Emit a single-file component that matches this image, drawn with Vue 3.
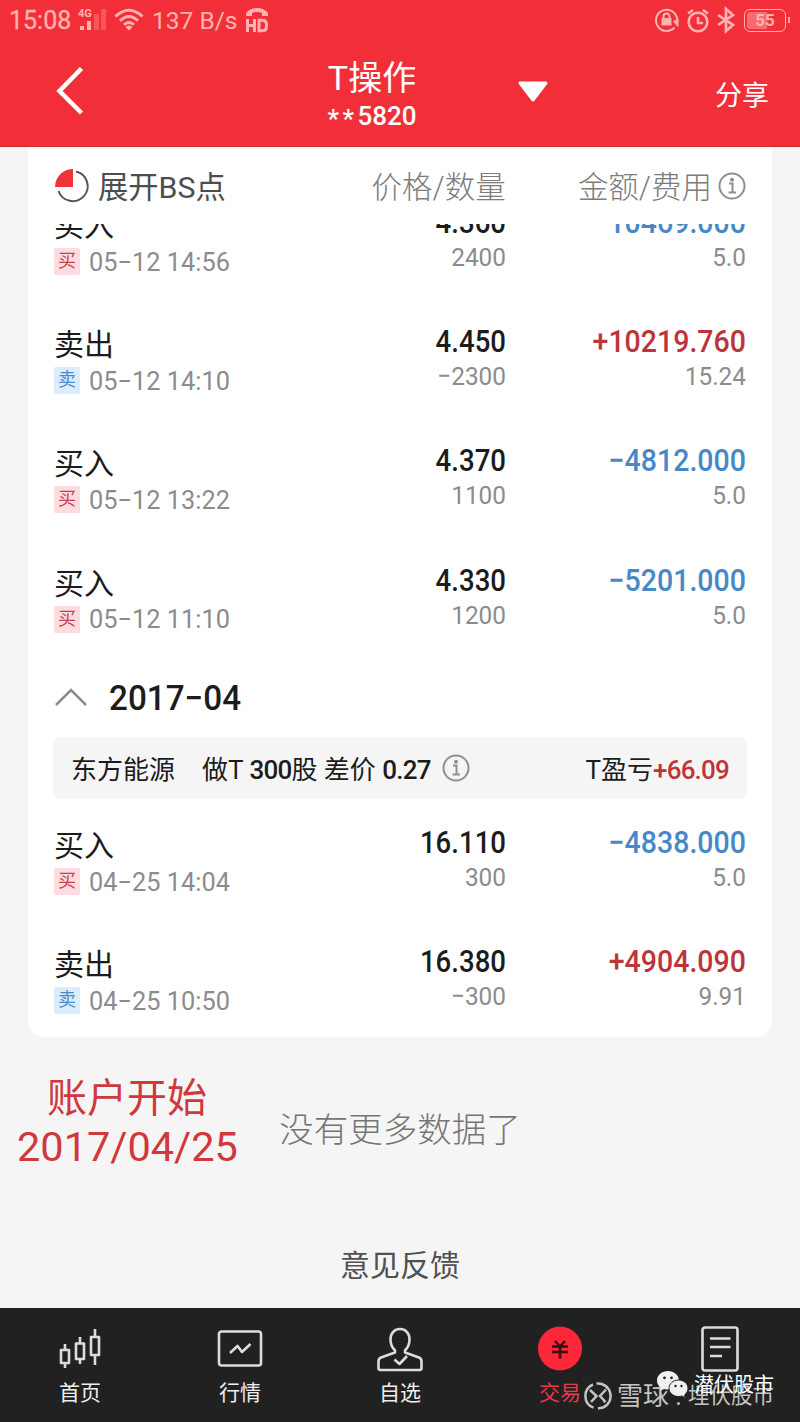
<template>
    <div class="page">
        <header class="header">
            <div class="status">
                <div class="status-left">
                    <span class="clock">15:08</span>
                    <svg class="ico-signal" viewBox="0 0 28 24" width="28" height="24">
                        <text x="0" y="9" class="net">4G</text>
                        <path d="M2 18h4v4H2zM9 13h4v9H9z" />
                        <path d="M16 6h5v16h-5zM23 1h5v21h-5z" opacity=".3" />
                    </svg>
                    <svg class="ico-wifi" viewBox="0 0 30 22" width="30" height="22">
                        <g fill="none" stroke-width="2.8">
                            <path d="M1.500 7.500Q15-5 28.500 7.500" />
                            <path d="M6 11.800Q15 3.300 24 11.800" />
                            <path d="M10 15.800Q15 11 20 15.800" />
                        </g>
                        <path d="M11.500 18Q15 14.800 18.500 18L15 21.500z" stroke="none" />
                    </svg>
                    <span class="speed">137 B/s</span>
                    <svg class="ico-hd" viewBox="0 0 24 25" width="24" height="25">
                        <path d="M1 8V5Q5 0 12 0T23 5V8H17V5Q12 3 7 5V8z" />
                        <path d="M2.500 11v13M9.500 11v13M2.500 17.500h7M14 12.200v10.600h3q4.500 0 4.500-4v-2.500q0-4.100-4.500-4.100z" fill="none" stroke-width="3" />
                    </svg>
                </div>
                <div class="status-right">
                    <svg viewBox="0 0 26 24" width="26" height="24">
                        <path d="M20.500 19.500A10.600 10.600 0 1 1 22.500 8.500Q23.500 11 23.400 13" fill="none" stroke-width="2" />
                        <path d="M19.500 13.500l4.500 5V11z" stroke-width="1" />
                        <path d="M7.500 10h10v7.500h-10z" />
                        <path d="M9.500 11V8.500a3 3 0 0 1 6 0V11" fill="none" stroke-width="2" />
                    </svg>
                    <svg viewBox="0 0 24 25" width="24" height="25">
                        <g fill="none" stroke-width="2.600">
                            <circle cx="12" cy="14" r="9.300" />
                            <path d="M12 9v6h5M2 5.500l5-3.500M22 5.500L17 2" />
                        </g>
                    </svg>
                    <svg viewBox="0 0 20 24" width="20" height="24">
                        <path d="M2 7l15 10-7 6V1l7 6L2 17" fill="none" stroke-width="2.700" />
                    </svg>
                    <div class="battery"><span>55</span></div>
                </div>
            </div>
            <div class="nav">
                <svg class="back" viewBox="0 0 28 48" width="28" height="48">
                    <path d="M25.500 1.500L3.500 24l22 22" />
                </svg>
                <div class="title">
                    <div class="title-main">T操作</div>
                    <div class="title-sub"><span class="stars">**</span>5820</div>
                </div>
                <svg class="caret" viewBox="0 0 32 22" width="32" height="22">
                    <path d="M3 2h26L16 19z" />
                </svg>
                <div class="share">分享</div>
            </div>
        </header>

        <main class="card">
            <div class="card-head">
                <svg class="pie" viewBox="0 0 34 34" width="34" height="34">
                    <path d="M18 18V0A18 18 0 0 0 0 18z" class="slice" />
                    <path d="M21 2.500A15 15 0 1 1 3.500 22" class="ring" />
                </svg>
                <div class="head-name">展开BS点</div>
                <div class="head-price">价格/数量</div>
                <div class="head-amount">金额/费用</div>
                <svg class="info" viewBox="0 0 28 28" width="28" height="28">
                    <circle cx="14" cy="14" r="12.500" />
                    <path d="M11 11.500h3.500V20M10.500 20.500h7.500" />
                    <circle cx="14" cy="7.800" r="1" class="dot" />
                </svg>
            </div>

            <div class="list">
                <div v-for="row in mayRows" :key="row.time" class="row">
                    <div class="c-name">
                        <div class="action">{{ row.buy ? '买入' : '卖出' }}</div>
                        <div class="when">
                            <span class="tag" :class="{ sell: !row.buy }">{{ row.buy ? '买' : '卖' }}</span>
                            <span class="time">{{ row.time }}</span>
                        </div>
                    </div>
                    <div class="c-price">
                        <div class="main">{{ row.price }}</div>
                        <div class="sub">{{ row.count }}</div>
                    </div>
                    <div class="c-amount">
                        <div class="main" :class="row.buy ? 'blue' : 'red'">{{ row.amount }}</div>
                        <div class="sub">{{ row.fee }}</div>
                    </div>
                </div>
            </div>

            <div class="month">
                <svg viewBox="0 0 34 20" width="34" height="20">
                    <path d="M2 18L17 3l15 15" />
                </svg>
                <span>2017−04</span>
            </div>

            <div class="summary">
                <span class="stock">东方能源</span>
                <span class="detail">做T <b>300</b>股 差价 <b>0.27</b></span>
                <svg class="info" viewBox="0 0 28 28" width="28" height="28">
                    <circle cx="14" cy="14" r="12.500" />
                    <path d="M11 11.500h3.500V20M10.500 20.500h7.500" />
                    <circle cx="14" cy="7.800" r="1" class="dot" />
                </svg>
                <span class="profit">T盈亏<b>+66.09</b></span>
            </div>

            <div class="list april">
                <div v-for="row in aprilRows" :key="row.time" class="row">
                    <div class="c-name">
                        <div class="action">{{ row.buy ? '买入' : '卖出' }}</div>
                        <div class="when">
                            <span class="tag" :class="{ sell: !row.buy }">{{ row.buy ? '买' : '卖' }}</span>
                            <span class="time">{{ row.time }}</span>
                        </div>
                    </div>
                    <div class="c-price">
                        <div class="main">{{ row.price }}</div>
                        <div class="sub">{{ row.count }}</div>
                    </div>
                    <div class="c-amount">
                        <div class="main" :class="row.buy ? 'blue' : 'red'">{{ row.amount }}</div>
                        <div class="sub">{{ row.fee }}</div>
                    </div>
                </div>
            </div>
        </main>

        <section class="foot">
            <div class="no-more">没有更多数据了</div>
            <div class="feedback">意见反馈</div>
            <div class="note">
                <div class="note-cn">账户开始</div>
                <div class="note-date">2017/04/25</div>
            </div>
        </section>

        <nav class="tabs">
            <div class="tab">
                <svg viewBox="0 0 46 46" width="46" height="46">
                    <path d="M4 22h8v13H4zM8 16v6M8 35v5M19 15.500h8V31h-8zM23 9v6M23 31v5M34 9h8v18h-8zM38 1v8M38 27v10" />
                </svg>
                <span>首页</span>
            </div>
            <div class="tab">
                <svg viewBox="0 0 46 46" width="46" height="46">
                    <rect x="2" y="3.500" width="42" height="34" rx="2.500" />
                    <path d="M13 25l7.500-7 4.500 6 8.500-8" />
                </svg>
                <span>行情</span>
            </div>
            <div class="tab">
                <svg viewBox="0 0 46 46" width="46" height="46">
                    <path d="M18 22.500c-3-3-4.500-6-4.500-11C13.500 5 17.500 1 23 1s9.500 4 9.500 10.500c0 5-1.500 8-4.500 11v2l14 5q2.500 1 2.500 4V40q0 2-2 2h-39q-2 0-2-2v-6.500q0-3 2.500-4l14-5z" />
                    <path d="M17.500 31.500l5 4.500 7.500-8" />
                </svg>
                <span>自选</span>
            </div>
            <div class="tab active">
                <svg viewBox="0 0 46 46" width="46" height="46">
                    <circle cx="23" cy="20.500" r="22" />
                    <path d="M18 13l5 5.500 5-5.500M15 18.500h16M15 24h16M23 18.500V30.500" />
                </svg>
                <span>交易</span>
            </div>
            <div class="tab">
                <svg viewBox="0 0 46 46" width="46" height="46">
                    <rect x="5.500" y="-.5" width="35" height="43" rx="2.500" />
                    <path d="M13 10.500h20.500M13 19h20.500M13 28h12" />
                </svg>
            </div>
        </nav>

        <div class="mark-xueqiu">
            <svg viewBox="0 0 28 28" width="28" height="28">
                <path d="M9 2.500A12.500 12.500 0 0 0 9.500 25.700M12.500 1.600A12.500 12.500 0 0 1 19 25.500L14 26.400" />
                <path d="M6 8l6.500 6L7 20M22 7.500L16 14l5.500 6M19.500 19l2 1" />
            </svg>
            <span>雪球</span>
            <span class="colon">:</span>
            <span class="account">埋伏股市</span>
        </div>
        <div class="mark-wechat">
            <svg viewBox="0 0 32 28" width="32" height="28">
                <path d="M11 0C5 0 0 4.200 0 9.500c0 3 1.500 5.500 4 7.200L3 20l4-2q2 .6 4 .6c6 0 11-4 11-9.100S17 0 11 0z" />
                <circle cx="7.500" cy="6.800" r="1.400" class="eye" />
                <circle cx="14.500" cy="6.800" r="1.400" class="eye" />
                <path d="M21.500 9C16 9 12 12.800 12 17.300S16 25.500 21.500 25.500q1.800 0 3.500-.5l3.500 2-1-3c2-1.600 3.500-4 3.500-6.700C31 12.800 27 9 21.500 9z" class="small" />
                <circle cx="18.500" cy="15" r="1.200" class="eye" />
                <circle cx="24.500" cy="15" r="1.200" class="eye" />
            </svg>
            <span>潜伏股市</span>
        </div>
    </div>
</template>

<script setup>
const mayRows = [
    { buy: true, time: '05−12 14:56', price: '4.360', count: '2400', amount: '−10469.000', fee: '5.0' },
    { buy: false, time: '05−12 14:10', price: '4.450', count: '−2300', amount: '+10219.760', fee: '15.24' },
    { buy: true, time: '05−12 13:22', price: '4.370', count: '1100', amount: '−4812.000', fee: '5.0' },
    { buy: true, time: '05−12 11:10', price: '4.330', count: '1200', amount: '−5201.000', fee: '5.0' }
]

const aprilRows = [
    { buy: true, time: '04−25 14:04', price: '16.110', count: '300', amount: '−4838.000', fee: '5.0' },
    { buy: false, time: '04−25 10:50', price: '16.380', count: '−300', amount: '+4904.090', fee: '9.91' }
]
</script>

<style>
body {
    margin: 0;
}
</style>

<style scoped>
.page {
    position: relative;
    display: flex;
    flex-direction: column;
    width: 800px;
    height: 1422px;
    overflow: hidden;
    background: #f5f5f5;
    font-family: Roboto, "Noto Sans CJK SC", sans-serif;
    color: #1c1c1c;
    white-space: nowrap;
}

svg {
    display: block;
    flex: none;
    overflow: visible;
}

b {
    font-weight: 500;
    letter-spacing: -0.8px;
}

/* header */
.header {
    height: 147px;
    flex: none;
    box-sizing: border-box;
    background: #f22f38;
    border-bottom: 1px solid #c82c35;
    color: #fff;
}

.status {
    display: flex;
    justify-content: space-between;
    height: 40px;
    padding: 0 11px 0 9px;
    color: #ffb3b0;
}

.status svg {
    fill: #ffb3b0;
    stroke: #ffb3b0;
    stroke-width: 0;
}

.status-left,
.status-right {
    display: flex;
    align-items: center;
}

.clock {
    width: 69px;
    font-size: 25px;
    line-height: 42px;
    padding-top: 2px;
    -webkit-text-stroke: 0.3px;
}

.net {
    font-size: 11px;
    font-weight: 700;
}

.ico-wifi {
    margin-left: 8px;
}

.speed {
    margin-left: 8px;
    width: 93px;
    font-size: 24.500px;
}

.status-right {
    gap: 6px;
}

.battery {
    position: relative;
    display: flex;
    align-items: center;
    justify-content: center;
    box-sizing: border-box;
    width: 42px;
    height: 23px;
    margin: 0 3px 0 2px;
    border: 1.5px solid #ffb3b0;
    border-radius: 6px;
    background: linear-gradient(90deg, #f86a70 55%, transparent 55%) content-box;
    padding: 2px;
    font-size: 17px;
    font-weight: 700;
}

.battery::after {
    content: "";
    position: absolute;
    right: -5px;
    top: 7px;
    width: 2px;
    height: 6px;
    background: #ffb3b0;
}

.nav {
    display: grid;
    grid-template-columns: 240px 264px 130px 1fr;
    height: 106px;
}

.back {
    margin: 27px 0 0 56px;
    fill: none;
    stroke: #fff;
    stroke-width: 4.5;
}

.title {
    text-align: center;
}

.title-main {
    margin-top: 16px;
    font-size: 34px;
    line-height: 44px;
}

.title-sub {
    margin-top: 2px;
    font-size: 26px;
    font-weight: 500;
    line-height: 28px;
}

.stars {
    display: inline-block;
    height: 28px;
    letter-spacing: 3.5px;
    transform: translateY(3px);
}

.caret {
    margin: 41px 0 0 13px;
    fill: #fff;
    stroke: #fff;
    stroke-width: 3;
    stroke-linejoin: round;
}

.share {
    padding: 36px 31px 0 0;
    text-align: right;
    font-size: 27px;
    line-height: 40px;
}

/* card */
.card {
    flex: none;
    box-sizing: border-box;
    width: 744px;
    height: 890px;
    margin: 0 28px;
    padding: 0 26px;
    border-radius: 0 0 16px 16px;
    background: #fff;
    overflow: hidden;
}

.card-head {
    display: flex;
    align-items: center;
    height: 77px;
    font-size: 30.500px;
    line-height: 44px;
    color: #7c7c7c;
}

.card-head div {
    padding-top: 4px;
}

.pie {
    margin-left: 1px;
}

.slice {
    fill: #ee3436;
}

.ring {
    fill: none;
    stroke: #555;
    stroke-width: 2;
}

.head-name {
    width: 180px;
    margin-left: 9px;
    color: #4d4d4d;
    font-size: 30.300px;
}

.head-price {
    width: 229px;
    text-align: right;
    font-weight: 300;
}

.head-amount {
    width: 207px;
    text-align: right;
    font-weight: 300;
}

.info {
    fill: none;
    stroke: #8f8f8f;
    stroke-width: 2;
}

.info .dot {
    fill: #8f8f8f;
}

.card-head .info {
    margin-left: 6px;
}

.list {
    height: 458px;
    overflow: hidden;
}

.list .row:first-child {
    margin-top: -19px;
}

.april {
    height: 239px;
}

.april .row:first-child {
    margin-top: 0;
}

.row {
    display: grid;
    grid-template-columns: 212px 240px 240px;
    height: 119.200px;
}

.c-name {
    padding-top: 1px;
}

.action {
    height: 40px;
    font-size: 30px;
    line-height: 40px;
}

.when {
    display: flex;
    align-items: center;
    height: 31px;
}

.tag {
    width: 26px;
    height: 27px;
    border-radius: 2px;
    background: #fcdcde;
    color: #c8404a;
    text-align: center;
    font-size: 18px;
    line-height: 26px;
}

.tag.sell {
    background: #dcecfb;
    color: #4a8ccb;
}

.time {
    margin-left: 9px;
    font-size: 26px;
    color: #8c8c8c;
    transform: scaleX(0.975);
    transform-origin: left;
}

.c-price,
.c-amount {
    text-align: right;
}

.main {
    height: 35px;
    font-size: 31px;
    font-weight: 500;
    line-height: 35px;
    transform: scaleX(0.92);
    transform-origin: right;
}

.c-price .main {
    transform: scaleX(0.89);
}

.sub {
    height: 35px;
    font-size: 26.500px;
    line-height: 34px;
    color: #8c8c8c;
    transform: scaleX(0.92);
    transform-origin: right;
}

.blue {
    color: #4788c7;
}

.red {
    color: #bd353b;
}

.month {
    display: flex;
    align-items: center;
    box-sizing: border-box;
    height: 55px;
    padding-bottom: 22px;
    font-size: 35px;
    font-weight: 500;
    line-height: 32px;
}

.month svg {
    margin-bottom: 3px;
    fill: none;
    stroke: #8c8c8c;
    stroke-width: 2.5;
}

.month span {
    margin-left: 21px;
    transform: scaleX(0.95);
    transform-origin: left;
}

.summary {
    display: flex;
    align-items: center;
    box-sizing: border-box;
    height: 62px;
    margin: 0 -1px 26px;
    padding: 0 18px;
    border-radius: 8px;
    background: #f5f5f5;
    font-size: 26px;
}

.stock,
.detail,
.profit {
    padding-bottom: 2px;
}

.detail {
    margin-left: 27px;
}

.summary .info {
    margin-left: 11px;
}

.profit {
    margin-left: auto;
}

.profit b {
    color: #bd353b;
}

/* area below the card */
.foot {
    position: relative;
    height: 271px;
    text-align: center;
}

.no-more {
    padding-top: 68px;
    font-size: 34.500px;
    font-weight: 300;
    line-height: 50px;
    color: #757575;
}

.feedback {
    margin-top: 89px;
    font-size: 30px;
    line-height: 44px;
    color: #505050;
}

.note {
    position: absolute;
    left: 17px;
    top: 37px;
    width: 220px;
    text-align: center;
    color: #d0383c;
}

.note-cn {
    font-size: 40px;
    line-height: 50px;
}

.note-date {
    font-size: 41.500px;
    line-height: 46px;
}

/* bottom tabs */
.tabs {
    display: grid;
    grid-template-columns: repeat(5, 1fr);
    height: 114px;
    flex: none;
    background: #212121;
}

.tab {
    display: flex;
    flex-direction: column;
    align-items: center;
    padding-top: 20px;
    font-size: 21px;
    line-height: 30px;
    color: #eee;
}

.tab svg {
    fill: none;
    stroke: #dcdcdc;
    stroke-width: 2.6;
    stroke-linejoin: round;
}

.tab span {
    margin-top: 4px;
}

.active {
    color: #e83a4a;
}

.active svg circle {
    fill: #fc2738;
    stroke: none;
}

.active svg path {
    stroke: #3c0c10;
}

/* watermarks over the tab bar */
.mark-xueqiu,
.mark-wechat {
    position: absolute;
    display: flex;
    align-items: center;
}

.mark-xueqiu {
    left: 584px;
    top: 1380px;
    font-size: 26px;
    line-height: 32px;
    color: #c4c4c4;
}

.mark-xueqiu svg {
    margin-right: 5px;
    fill: none;
    stroke: #c4c4c4;
    stroke-width: 2.5;
}

.colon {
    width: 19px;
    text-align: center;
}

.account {
    font-size: 21.500px;
}

.mark-wechat {
    left: 657px;
    top: 1370px;
    gap: 5px;
    font-size: 20px;
    line-height: 30px;
    color: #fff;
}

.mark-wechat svg {
    fill: #f0f0f0;
}

.small {
    stroke: #212121;
    stroke-width: 1;
}

/* keeps the eyes the bar's colour */
.mark-wechat .eye {
    fill: #212121;
}
</style>
